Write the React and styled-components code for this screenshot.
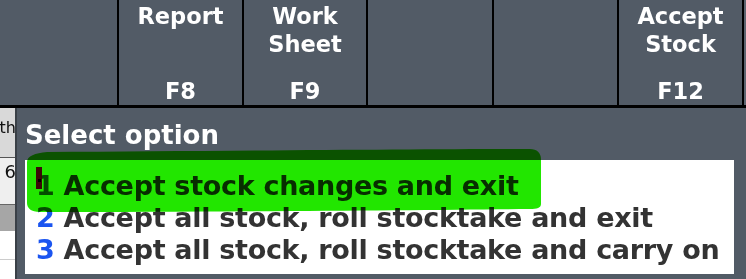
import React from "react";
import styled, { createGlobalStyle } from "styled-components";

const GlobalStyle = createGlobalStyle`
  html, body {
    margin: 0;
    padding: 0;
    width: 746px;
    height: 279px;
    overflow: hidden;
    background: #ffffff;
    font-family: "DejaVu Sans", Verdana, sans-serif;
  }
`;

const Screen = styled.div`
  width: 746px;
  height: 279px;
  display: flex;
  flex-direction: column;
  position: relative;
`;

const Toolbar = styled.div`
  display: flex;
  gap: 2px;
  height: 105px;
  background: #000;
  border-bottom: 3px solid #000;
  flex: 0 0 auto;
`;

const ToolButton = styled.div`
  flex: 0 0 ${(p) => p.$w}px;
  background: ${(p) => (p.$edge ? "#5c6570" : "#525b66")};
  color: #fff;
  font-weight: bold;
  font-size: 22.5px;
  line-height: 28px;
  text-align: center;
  display: flex;
  flex-direction: column;
  justify-content: space-between;
  padding-top: 2px;
  box-sizing: border-box;
`;

const KeyLabel = styled.div`
  line-height: 28px;
`;

const Body = styled.div`
  flex: 1;
  position: relative;
  overflow: hidden;
`;

/* the table that sits behind the dialog */
const Table = styled.div`
  display: flex;
  flex-direction: column;
  width: 16px;
  height: 100%;
`;

const Cell = styled.div`
  height: ${(p) => p.$h}px;
  background: ${(p) => p.$bg};
  border-bottom: ${(p) => (p.$line ? `1px solid ${p.$line}` : "none")};
  display: flex;
  justify-content: flex-end;
  align-items: flex-start;
  padding-top: ${(p) => p.$pt || 0}px;
  box-sizing: border-box;
  overflow: hidden;
  white-space: nowrap;
  font-size: ${(p) => p.$fs || 16}px;
  line-height: 1.2;
  color: #111;
`;

const Dialog = styled.div`
  position: absolute;
  left: 15px;
  top: 0;
  right: 0;
  bottom: 0;
  background: #525b66;
  border-left: 2px solid #3a4047;
  padding: 12px 12px 4px 8px;
  display: flex;
  flex-direction: column;
  gap: 10px;
`;

const Title = styled.div`
  color: #fff;
  font-weight: bold;
  font-size: 26px;
  line-height: 30px;
`;

const OptionList = styled.div`
  background: #fff;
  padding: 10px 11px 8px;
  display: flex;
  flex-direction: column;
`;

const Option = styled.div`
  font-weight: bold;
  font-size: 27px;
  letter-spacing: -0.3px;
  line-height: 32px;
  color: #333333;
  white-space: nowrap;
`;

const Num = styled.span`
  color: #1b55f0;
`;

const Highlight = styled.svg`
  position: absolute;
  left: 0;
  top: 0;
  mix-blend-mode: multiply;
  pointer-events: none;
`;

const CursorMark = styled.div`
  position: absolute;
  left: 19px;
  top: 59px;
  width: 6px;
  height: 22px;
  background: #3c0808;
  &::after {
    content: "";
    position: absolute;
    left: 2px;
    top: 12px;
    width: 3px;
    height: 3px;
    background: #000;
  }
`;

const buttons = [
  { w: 117, lines: [], key: "" },
  { w: 123, lines: ["Report"], key: "F8" },
  { w: 122, lines: ["Work", "Sheet"], key: "F9" },
  { w: 124, lines: [], key: "" },
  { w: 123, lines: [], key: "" },
  { w: 123, lines: ["Accept", "Stock"], key: "F12" },
  { w: 2, lines: [], key: "", edge: true },
];

const options = [
  "Accept stock changes and exit",
  "Accept all stock, roll stocktake and exit",
  "Accept all stock, roll stocktake and carry on",
];

export default function App() {
  return (
    <Screen>
      <GlobalStyle />
      <Toolbar>
        {buttons.map((b, i) => (
          <ToolButton key={i} $w={b.w} $edge={b.edge}>
            <div>
              {b.lines.map((l) => (
                <div key={l}>{l}</div>
              ))}
            </div>
            <KeyLabel>{b.key}</KeyLabel>
          </ToolButton>
        ))}
      </Toolbar>
      <Body>
        <Table>
          <Cell $h={52} $bg="#d9d9d9" $line="#555" $pt={10}>
            th
          </Cell>
          <Cell $h={49} $bg="#efefef" $line="#666" $pt={3} $fs={18}>
            6
          </Cell>
          <Cell $h={28} $bg="#a6a6a6" />
          <Cell $h={30} $bg="#ffffff" $line="#cccccc" />
          <Cell $h={20} $bg="#ffffff" />
        </Table>
        <Dialog>
          <Title>Select option</Title>
          <OptionList>
            {options.map((o, i) => (
              <Option key={i}>
                <Num>{i + 1}</Num> {o}
              </Option>
            ))}
          </OptionList>
          <Highlight width="731" height="171" viewBox="0 0 731 171">
            <path
              d="M 10 54 C 10 48, 18 45, 30 44 C 200 43, 400 41, 513 41 C 520 41, 524 45, 524 51 L 524 96 C 524 100, 520 101, 513 101 C 400 102, 200 104, 23 104 C 14 104, 10 100, 10 95 Z"
              fill="#22e600"
            />
          </Highlight>
          <CursorMark />
        </Dialog>
      </Body>
    </Screen>
  );
}
